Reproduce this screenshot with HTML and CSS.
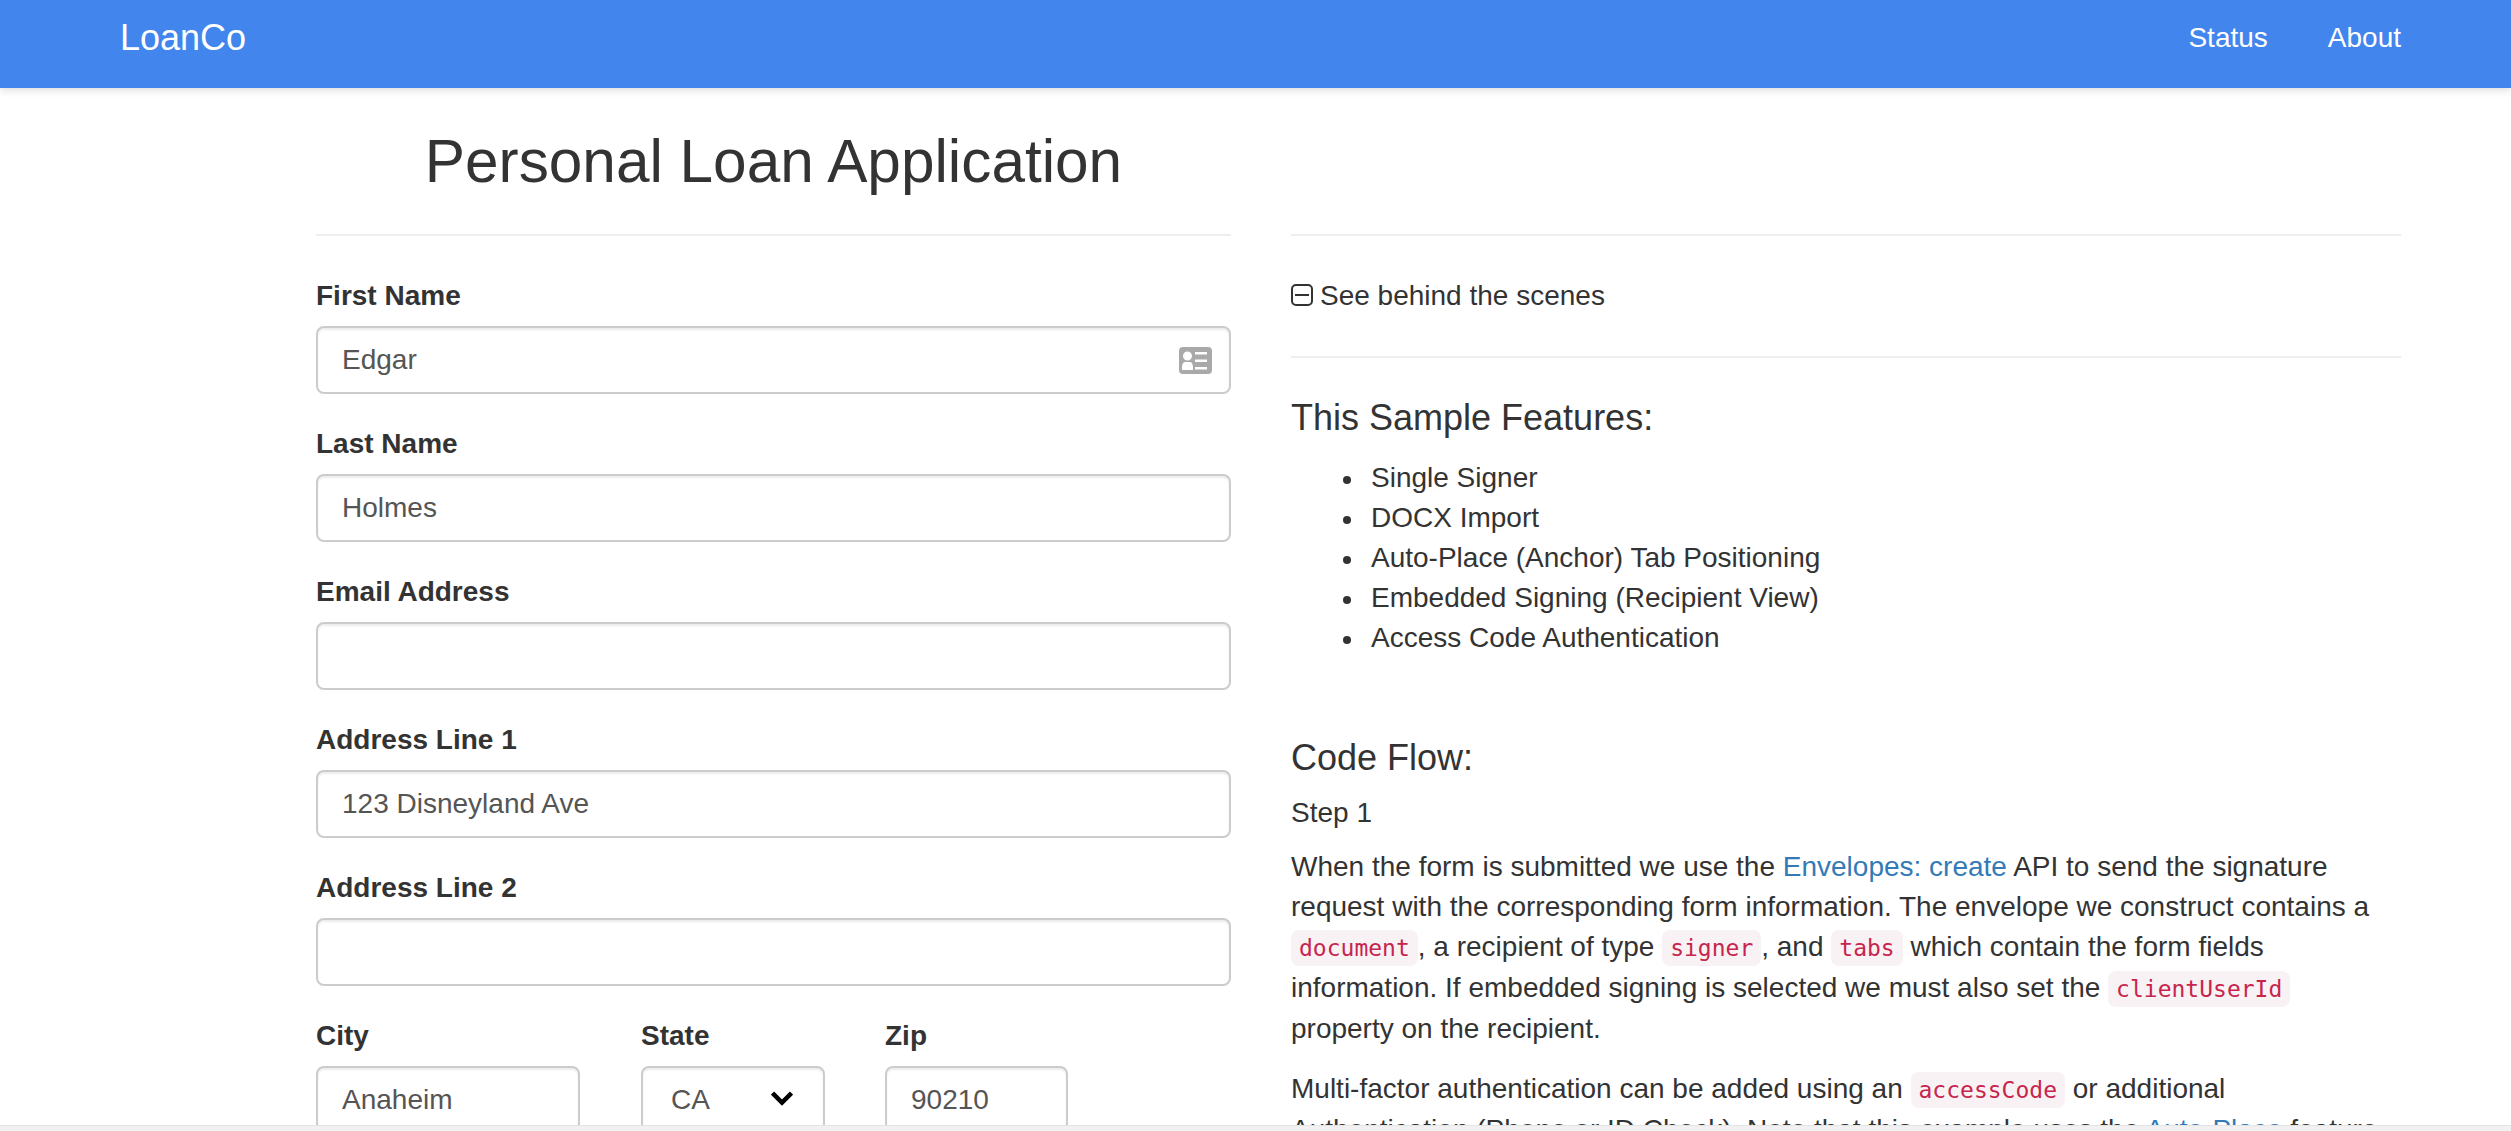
FILE: index.html
```html
<!DOCTYPE html>
<html lang="en">
<head>
<meta charset="utf-8">
<title>LoanCo</title>
<link rel="stylesheet" href="styles.css">
</head>
<body>
<nav class="navbar">
  <a class="brand">LoanCo</a>
  <div class="nav-links"><a>Status</a><a>About</a></div>
</nav>
<main class="layout">
  <section class="col-form">
    <h1 class="title">Personal Loan Application</h1>
    <hr class="rule">
    <form class="form">
      <div class="field">
        <label>First Name</label>
        <div class="input has-icon"><span>Edgar</span>
          <svg class="card-icon" viewBox="0 0 33 27"><path fill="#a9a9a9" fill-rule="evenodd" d="M4 0h25a4 4 0 0 1 4 4v19a4 4 0 0 1-4 4H4a4 4 0 0 1-4-4V4a4 4 0 0 1 4-4zM8.500 4.500a4.500 4.500 0 1 0 0 9 4.500 4.500 0 0 0 0-9zM3 23h11v-3c0-3-1.500-5-3-5H6c-1.500 0-3 2-3 5zM16 5v2.500h12V5zM16 12.500v2.500h12v-2.500zM16 20v2.500h12V20z"/></svg>
        </div>
      </div>
      <div class="field"><label>Last Name</label><div class="input"><span>Holmes</span></div></div>
      <div class="field"><label>Email Address</label><div class="input"></div></div>
      <div class="field"><label>Address Line 1</label><div class="input"><span>123 Disneyland Ave</span></div></div>
      <div class="field"><label>Address Line 2</label><div class="input"></div></div>
      <div class="field-row">
        <div class="field city"><label>City</label><div class="input"><span>Anaheim</span></div></div>
        <div class="field state"><label>State</label>
          <div class="input select"><span>CA</span>
            <svg class="chevron" viewBox="0 0 22 16"><path fill="none" stroke="#000" stroke-width="4.500" d="M1.500 3l9.500 9.500L20.500 3"/></svg>
          </div>
        </div>
        <div class="field zip"><label>Zip</label><div class="input"><span>90210</span></div></div>
      </div>
    </form>
  </section>
  <section class="col-info">
    <hr class="rule first">
    <p class="toggle">
      <svg class="minus-icon" viewBox="0 0 22 22"><rect x="1" y="1" width="20" height="20" rx="4" fill="none" stroke="#333" stroke-width="2"/><path d="M4 11h14" stroke="#333" stroke-width="2"/></svg>
      <span>See behind the scenes</span>
    </p>
    <hr class="rule second">
    <h4 class="heading">This Sample Features:</h4>
    <ul class="features">
      <li>Single Signer</li>
      <li>DOCX Import</li>
      <li>Auto-Place (Anchor) Tab Positioning</li>
      <li>Embedded Signing (Recipient View)</li>
      <li>Access Code Authentication</li>
    </ul>
    <h4 class="heading flow">Code Flow:</h4>
    <p class="step">Step 1</p>
    <p>When the form is submitted we use the <a class="link">Envelopes: create</a> API to send the signature request with the corresponding form information. The envelope we construct contains a <code>document</code>, a recipient of type <code>signer</code>, and <code>tabs</code> which contain the form fields information. If embedded signing is selected we must also set the <code>clientUserId</code><br>property on the recipient.</p>
    <p>Multi-factor authentication can be added using an <code>accessCode</code> or additional Authentication (Phone or ID Check). Note that this example uses the <a class="link">Auto-Place</a> feature</p>
  </section>
</main>
<div class="bottom-bar"></div>
</body>
</html>
```
FILE: styles.css
```css
* { box-sizing: border-box; }
html, body { height: 100%; }
body {
  margin: 0;
  overflow: hidden;
  background: #fff;
  color: #333;
  font-family: "Liberation Sans", Arial, sans-serif;
  font-size: 28px;
  line-height: 40px;
  text-rendering: optimizeSpeed;
}
.navbar {
  height: 88px;
  padding: 0 110px 0 120px;
  background: #4285ed;
  box-shadow: 0 2px 8px rgba(0,0,0,.15);
  display: flex;
  justify-content: space-between;
  color: #fff;
  position: relative;
}
.brand { font-size: 36px; line-height: 76px; }
.nav-links { display: flex; gap: 60px; line-height: 76px; }
.layout {
  display: grid;
  grid-template-columns: 915px 1110px;
  column-gap: 60px;
  padding-left: 316px;
}
.title {
  margin: 40px 0 40px;
  text-align: center;
  font-size: 60.3px;
  font-weight: 400;
  line-height: 66px;
}
.rule { border: 0; border-top: 2px solid #eee; margin: 0; }
.form { margin-top: 40px; }
.field { margin-bottom: 30px; }
.field label { display: block; font-weight: 700; margin-bottom: 10px; }
.input {
  height: 68px;
  padding: 0 24px;
  border: 2px solid #ccc;
  border-radius: 8px;
  box-shadow: inset 0 2px 2px rgba(0,0,0,.075);
  color: #555;
  display: flex;
  align-items: center;
  justify-content: space-between;
}
.card-icon { width: 33px; height: 27px; margin-right: -7px; }
.field-row { display: flex; gap: 61px; }
.city { width: 264px; }
.state { width: 184px; }
.zip { width: 183px; margin-left: -1px; }
.select { padding: 0 28px; }
.chevron { width: 22px; height: 16px; margin: -4px 2px 0 0; }
.first { margin-top: 146px; }
.toggle { margin: 40px 0; display: flex; align-items: center; gap: 7px; }
.minus-icon { width: 22px; height: 22px; flex: none; margin-top: -2px; }
.heading { font-size: 36px; font-weight: 400; line-height: 40px; margin: 40px 0 20px; }
.features { margin: 0 0 80px; padding: 0 0 0 80px; list-style: none; }
.features li::before {
  content: "";
  display: inline-block;
  width: 8px;
  height: 8px;
  margin: 0 20px 3px -28px;
  border-radius: 50%;
  background: #333;
}
.flow { margin-bottom: 15px; }
p { margin: 0 0 20px; }
.step { margin-bottom: 14px; }
.link { color: #337ab7; }
code {
  padding: 5px 8px;
  font-family: "DejaVu Sans Mono", monospace;
  font-size: 23px;
  color: #c7254e;
  background: #f9f2f4;
  border-radius: 8px;
}
.bottom-bar {
  position: fixed;
  left: 0; right: 0; bottom: 0;
  height: 6px;
  background: #f1f1f1;
  border-top: 1px solid #e4e4e4;
}
```
